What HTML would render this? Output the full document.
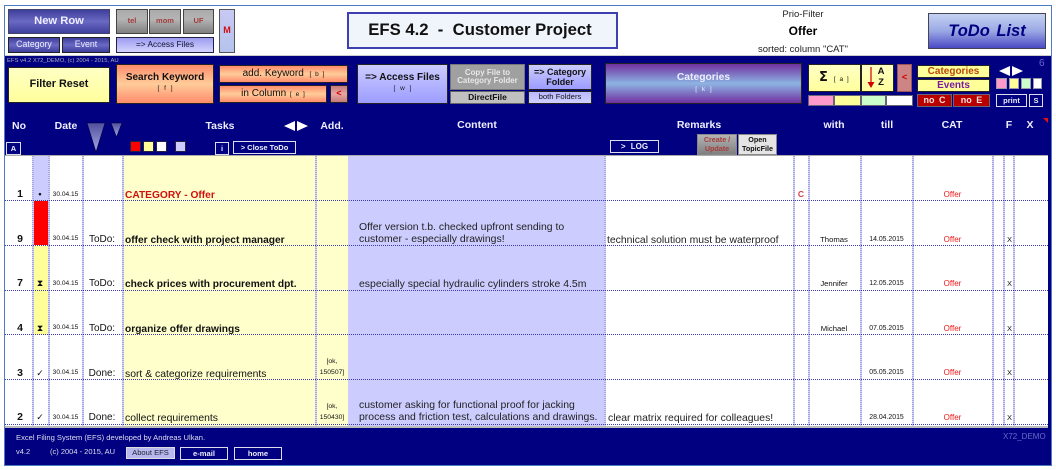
<!DOCTYPE html>
<html><head><meta charset="utf-8">
<style>
html,body{margin:0;padding:0;background:#fff}
#p{position:relative;width:1056px;height:470px;overflow:hidden;background:#fff;font-family:"Liberation Sans",sans-serif;color:#111;filter:blur(.35px)}
#p div{position:absolute;box-sizing:border-box;white-space:nowrap}
.b{display:flex;flex-direction:column;align-items:center;justify-content:center;text-align:center;border:1px solid #222;line-height:1.1}
.h{color:#eef;font-weight:bold;font-size:10.5px;line-height:12px;text-align:center}
.w{border:1px solid #dde;color:#eef;font-weight:bold;font-size:7.5px;display:flex;align-items:center;justify-content:center}
.v{top:156px;height:270px;width:2px;background:repeating-linear-gradient(180deg,#a8a8e4 0 1px,#d4d4f4 1px 2px)}
.l{left:5px;width:1043px;height:0;border-top:1px dotted #3a3ab0}
.n{left:8px;width:24px;text-align:center;font-weight:bold;font-size:10.5px;line-height:12px}
.m{left:32px;width:16px;text-align:center;font-size:9px;line-height:10px}
.d{left:48px;width:34px;text-align:center;font-size:6.6px;line-height:10px;padding-left:1px}
.s{left:82px;width:40px;text-align:center;font-size:10px;line-height:12px;margin-top:1px}
.k{left:125px;font-size:10.2px;line-height:12px;margin-top:1.5px}
.kn{left:125px;font-size:10.4px;line-height:12px;margin-top:1.5px}
.c{left:359px;font-size:10.45px;line-height:12.7px;color:#222;margin-top:1.5px}
.r{left:607px;font-size:10.4px;line-height:12px;color:#222;margin-top:1.5px}
.wi{left:808px;width:52px;text-align:center;font-size:7.7px;line-height:10px}
.ti{left:860px;width:53px;text-align:center;font-size:6.9px;line-height:10px}
.o{left:913px;width:79px;text-align:center;font-size:8px;line-height:10px;color:#f01818}
.x{left:1004px;width:11px;text-align:center;font-size:7.5px;line-height:10px}
</style></head><body><div id="p">

<div style="left:4px;top:5px;width:1048px;height:461px;border:1px solid #4f7cc0"></div>
<div style="left:5px;top:55px;width:1046px;height:1px;background:#ccc"></div>

<div class="b" style="left:8px;top:9px;width:102px;height:25px;background:linear-gradient(#3e3e9c,#6a6ac4 50%,#3e3e9c);color:#eef;font-weight:bold;font-size:11.2px;border-color:#446">New Row</div>
<div class="b" style="left:8px;top:37px;width:52px;height:16px;background:linear-gradient(#3e3e9c,#6a6ac4 50%,#3e3e9c);color:#eef;font-size:8.8px">Category</div>
<div class="b" style="left:62px;top:37px;width:48px;height:16px;background:linear-gradient(#3e3e9c,#6a6ac4 50%,#3e3e9c);color:#eef;font-size:8.8px">Event</div>
<div class="b" style="left:116px;top:9px;width:32px;height:25px;background:linear-gradient(#aaa,#b4b4b4 40%,#808080);color:#a23c3c;font-weight:bold;font-size:7.5px;border-color:#444">tel</div>
<div class="b" style="left:149px;top:9px;width:32px;height:25px;background:linear-gradient(#aaa,#b4b4b4 40%,#808080);color:#a23c3c;font-weight:bold;font-size:7.5px;border-color:#444">mom</div>
<div class="b" style="left:183px;top:9px;width:31px;height:25px;background:linear-gradient(#aaa,#b4b4b4 40%,#808080);color:#a23c3c;font-weight:bold;font-size:7.5px;border-color:#444">UF</div>
<div class="b" style="left:116px;top:37px;width:98px;height:16px;background:linear-gradient(#9c9cf0,#d4d4ff);color:#113;font-size:8.3px;border-color:#224">=&gt; Access Files</div>
<div class="b" style="left:219px;top:9px;width:16px;height:44px;background:linear-gradient(#c8c8f4,#b4c4ec);color:#d01010;font-weight:bold;font-size:9px;border-color:#555">M</div>

<div class="b" style="left:347px;top:12px;width:271px;height:37px;background:#f0f5fc;border:2px solid #3f3fb4;color:#111;font-weight:bold;font-size:16.7px;white-space:pre;padding-right:5px">EFS 4.2  -  Customer Project</div>

<div style="left:743px;top:9px;width:120px;text-align:center;font-size:9.5px;line-height:12px;color:#222">Prio-Filter</div>
<div style="left:743px;top:23px;width:120px;text-align:center;font-size:12px;font-weight:bold;line-height:16px;color:#000">Offer</div>
<div style="left:743px;top:44px;width:120px;text-align:center;font-size:9.5px;line-height:12px;color:#222">sorted: column "CAT"</div>
<div class="b" style="left:928px;top:13px;width:118px;height:36px;background:linear-gradient(#c4d2f2,#9aa8e4 50%,#4a4ac4);border-color:#445;color:#000080;font-weight:bold;font-style:italic;font-size:16.5px;word-spacing:2px">ToDo List</div>

<div style="left:5px;top:56px;width:1046px;height:100px;background:#000080"></div>
<div style="left:7px;top:58px;font-size:5.9px;line-height:7px;color:#aab">EFS v4.2 X72_DEMO, (c) 2004 - 2015, AU</div>

<div class="b" style="left:8px;top:67px;width:102px;height:36px;background:linear-gradient(#ffffc4,#ffff9c);font-weight:bold;font-size:10.8px">Filter Reset</div>
<div class="b" style="left:116px;top:64px;width:98px;height:40px;background:linear-gradient(#ff8c6c,#ffcc99 50%,#ff8c6c);font-weight:bold;font-size:10px;padding-bottom:4px">Search Keyword<span style="font-size:6.5px;font-weight:normal;word-spacing:3px;margin-top:2px">[ f ]</span></div>
<div class="b" style="left:219px;top:65px;width:129px;height:18px;background:linear-gradient(#ff8c6c,#ffcc99 50%,#ff8c6c);font-size:10px;display:block;line-height:16px">add. Keyword <span style="font-size:6.5px;word-spacing:2px;margin-left:3px">[ b ]</span></div>
<div class="b" style="left:219px;top:85px;width:108px;height:18px;background:linear-gradient(#ff8c6c,#ffcc99 50%,#ff8c6c);font-size:10px;display:block;line-height:16px">in Column <span style="font-size:6.5px;word-spacing:2px;margin-left:1px">[ e ]</span></div>
<div class="b" style="left:330px;top:85px;width:18px;height:18px;background:linear-gradient(#c47a7a,#e8a4a4 50%,#c47a7a);color:#d00000;font-weight:bold;font-size:9px">&lt;</div>

<div class="b" style="left:357px;top:64px;width:91px;height:40px;background:linear-gradient(#ccccff,#9c9cff);font-weight:bold;font-size:10px;padding-bottom:4px">=&gt; Access Files<span style="font-size:6.5px;font-weight:normal;word-spacing:3px;margin-top:2px">[ w ]</span></div>
<div class="b" style="left:450px;top:64px;width:75px;height:26px;background:#a0a0a0;color:#e8e8e8;font-weight:bold;font-size:7.9px;line-height:8.5px;border-color:#777">Copy File to<br>Category Folder</div>
<div class="b" style="left:450px;top:91px;width:75px;height:13px;background:#c0c0c0;font-weight:bold;font-size:8.5px;border-color:#666">DirectFile</div>
<div class="b" style="left:528px;top:64px;width:64px;height:26px;background:linear-gradient(#ccccff,#9c9cff);font-weight:bold;font-size:9px;line-height:10px">=&gt; Category<br>Folder</div>
<div class="b" style="left:528px;top:91px;width:64px;height:13px;background:linear-gradient(#b8b8ff,#d0d0ff);font-size:7.7px">both Folders</div>
<div class="b" style="left:605px;top:63px;width:197px;height:41px;background:linear-gradient(#7030a0,#8db4e2 50%,#7030a0);color:#eef;font-weight:bold;font-size:10.3px;padding-bottom:2px">Categories<span style="font-size:6.5px;font-weight:normal;word-spacing:3px;margin-top:3px">[ k ]</span></div>

<div class="b" style="left:808px;top:64px;width:53px;height:28px;background:linear-gradient(#ffffc4,#ffff9c);display:block;line-height:24px;padding-left:10px;text-align:left"><span style="font-family:'DejaVu Sans',sans-serif;font-weight:bold;font-size:13px">Σ</span><span style="font-size:6.5px;word-spacing:2px;margin-left:6px">[ a ]</span></div>
<div class="b" style="left:861px;top:64px;width:33px;height:28px;background:linear-gradient(#ffffc4,#ffff9c)"></div>
<svg style="position:absolute;left:866px;top:66px" width="10" height="24"><path d="M5 1V18" stroke="#d00000" stroke-width="1.2"/><path d="M1.5 16H8.5L5 22Z" fill="#d00000"/></svg>
<div style="left:875px;top:66px;width:12px;text-align:center;font-weight:bold;font-size:9.5px;line-height:11px">A<br>Z</div>
<div class="b" style="left:897px;top:64px;width:15px;height:28px;background:#cc8484;color:#d00000;font-weight:bold;font-size:9px;border-color:#955">&lt;</div>
<div style="left:808px;top:95px;width:26px;height:11px;background:#ff99cc;border:1px solid #667"></div>
<div style="left:834px;top:95px;width:27px;height:11px;background:#ffff99;border:1px solid #667"></div>
<div style="left:861px;top:95px;width:25px;height:11px;background:#ccffcc;border:1px solid #667"></div>
<div style="left:886px;top:95px;width:27px;height:11px;background:#fff;border:1px solid #667"></div>

<div class="b" style="left:917px;top:65px;width:73px;height:13px;background:#ffff99;color:#b8480c;font-weight:bold;font-size:10px">Categories</div>
<div class="b" style="left:917px;top:79px;width:73px;height:13px;background:#ffff99;color:#7a1ca0;font-weight:bold;font-size:10px">Events</div>
<div class="b" style="left:917px;top:94px;width:35px;height:13px;background:#b80000;color:#f4e0e0;font-weight:bold;font-size:9px;word-spacing:2px;border-color:#667">no C</div>
<div class="b" style="left:953px;top:94px;width:37px;height:13px;background:#b80000;color:#f4e0e0;font-weight:bold;font-size:9px;word-spacing:2px;border-color:#667">no E</div>

<svg style="position:absolute;left:998px;top:65px" width="26" height="12"><path d="M1 6L12 1V11Z" fill="#fff"/><path d="M14 1L25 6L14 11Z" fill="#fff"/></svg>
<div style="left:996px;top:78px;width:11px;height:11px;background:#ff99cc;border:1px solid #99a"></div>
<div style="left:1009px;top:78px;width:10px;height:11px;background:#ffff99;border:1px solid #99a"></div>
<div style="left:1021px;top:78px;width:10px;height:11px;background:#ccffcc;border:1px solid #99a"></div>
<div style="left:1033px;top:78px;width:9px;height:11px;background:#fff;border:1px solid #99a"></div>
<div class="w" style="left:996px;top:94px;width:31px;height:13px">print</div>
<div class="w" style="left:1029px;top:94px;width:14px;height:13px">S</div>
<div style="left:1039px;top:58px;font-size:10px;line-height:12px;color:#6a6ad4">6</div>

<div class="h" style="left:9px;top:120px;width:20px">No</div>
<div class="h" style="left:50px;top:120px;width:32px">Date</div>
<svg style="position:absolute;left:86px;top:122px" width="37" height="31"><defs><linearGradient id="g" x1="0" y1="0" x2="0" y2="1"><stop offset="0" stop-color="#50509c"/><stop offset="1" stop-color="#a8a8e8"/></linearGradient></defs><path d="M1 1H19L10 30Z" fill="url(#g)" stroke="#000040" stroke-width=".6"/><path d="M25 1H36L30.5 15Z" fill="url(#g)" stroke="#000040" stroke-width=".6"/></svg>
<div class="h" style="left:200px;top:120px;width:40px">Tasks</div>
<svg style="position:absolute;left:283px;top:120px" width="26" height="12"><path d="M1 6L12 1V11Z" fill="#fff"/><path d="M14 1L25 6L14 11Z" fill="#fff"/></svg>
<div class="h" style="left:316px;top:120px;width:32px">Add.</div>
<div class="h" style="left:447px;top:119px;width:60px">Content</div>
<div class="h" style="left:669px;top:119px;width:60px">Remarks</div>
<div class="h" style="left:814px;top:119px;width:40px">with</div>
<div class="h" style="left:867px;top:119px;width:40px">till</div>
<div class="h" style="left:932px;top:119px;width:40px">CAT</div>
<div class="h" style="left:999px;top:119px;width:20px">F</div>
<div class="h" style="left:1020px;top:119px;width:20px">X</div>
<svg style="position:absolute;left:1043px;top:118px" width="6" height="6"><path d="M0 0H5V5Z" fill="#e01010"/></svg>

<div class="w" style="left:6px;top:142px;width:15px;height:13px">A</div>
<div style="left:130px;top:141px;width:11px;height:11px;background:#f00;border:1px solid #224"></div>
<div style="left:143px;top:141px;width:11px;height:11px;background:#ffff99;border:1px solid #224"></div>
<div style="left:156px;top:141px;width:11px;height:11px;background:#fff;border:1px solid #224"></div>
<div style="left:175px;top:141px;width:11px;height:11px;background:#ccccff;border:1px solid #224"></div>
<div class="w" style="left:215px;top:142px;width:14px;height:13px">i</div>
<div class="w" style="left:233px;top:141px;width:63px;height:13px">&gt; Close ToDo</div>
<div class="w" style="left:610px;top:140px;width:49px;height:13px;word-spacing:3px;font-size:8px">&gt; LOG</div>
<div class="b" style="left:697px;top:134px;width:40px;height:21px;background:linear-gradient(#b4b4b4,#808080);color:#a83c3c;font-weight:bold;font-size:7.2px;line-height:8.5px;border-color:#888">Create /<br>Update</div>
<div class="b" style="left:738px;top:134px;width:39px;height:21px;background:#e4e4e4;color:#111;font-weight:bold;font-size:7.2px;line-height:8.5px;border-color:#888">Open<br>TopicFile</div>
<div style="left:5px;top:155px;width:1043px;height:1px;background:#aaa"></div>

<!-- table -->
<div style="left:5px;top:156px;width:1043px;height:272px;background:#fff"></div>
<div style="left:122px;top:156px;width:226px;height:270px;background:#ffffcc"></div>
<div style="left:348px;top:156px;width:257px;height:270px;background:#ccccff"></div>
<div style="left:33px;top:156px;width:15px;height:45px;background:#ccccff"></div>
<div style="left:33px;top:201px;width:15px;height:44px;background:#f00"></div>
<div style="left:33px;top:246px;width:15px;height:89px;background:#ffff99"></div>
<div class="v" style="left:32px"></div><div class="v" style="left:48px"></div><div class="v" style="left:82px"></div>
<div class="v" style="left:122px"></div><div class="v" style="left:315px"></div><div class="v" style="left:604px"></div>
<div class="v" style="left:793px"></div><div class="v" style="left:808px"></div><div class="v" style="left:860px"></div>
<div class="v" style="left:912px"></div><div class="v" style="left:992px"></div><div class="v" style="left:1003px"></div><div class="v" style="left:1013px"></div>
<div class="l" style="top:200px"></div><div class="l" style="top:245px"></div><div class="l" style="top:290px"></div>
<div class="l" style="top:334px"></div><div class="l" style="top:379px"></div><div class="l" style="top:424px"></div>

<div class="n" style="top:188px">1</div><div class="m" style="top:189px;font-weight:bold">•</div><div class="d" style="top:190px">30.04.15</div>
<div class="k" style="top:188px;color:#d01010;font-weight:bold">CATEGORY - Offer</div>
<div style="left:794px;top:189px;width:14px;text-align:center;font-size:8.5px;font-weight:bold;line-height:10px;color:#d84040">C</div>
<div class="o" style="top:190px">Offer</div>

<div class="n" style="top:233px">9</div><div class="d" style="top:234px">30.04.15</div><div class="s" style="top:233px">ToDo:</div>
<div class="k" style="top:233px;font-weight:bold">offer check with project manager</div>
<div class="c" style="top:220px">Offer version t.b. checked upfront sending to<br>customer - especially drawings!</div>
<div class="r" style="top:233px">technical solution must be waterproof</div>
<div class="wi" style="top:235px">Thomas</div><div class="ti" style="top:235px">14.05.2015</div><div class="o" style="top:235px">Offer</div><div class="x" style="top:235px">X</div>

<div class="n" style="top:277px">7</div><div class="m" style="top:278px">⧗</div><div class="d" style="top:279px">30.04.15</div><div class="s" style="top:277px">ToDo:</div>
<div class="k" style="top:277px;font-weight:bold">check prices with procurement dpt.</div>
<div class="c" style="top:277px">especially special hydraulic cylinders stroke 4.5m</div>
<div class="wi" style="top:279px">Jennifer</div><div class="ti" style="top:279px">12.05.2015</div><div class="o" style="top:279px">Offer</div><div class="x" style="top:279px">X</div>

<div class="n" style="top:322px">4</div><div class="m" style="top:323px">⧗</div><div class="d" style="top:323px">30.04.15</div><div class="s" style="top:322px">ToDo:</div>
<div class="k" style="top:322px;font-weight:bold">organize offer drawings</div>
<div class="wi" style="top:324px">Michael</div><div class="ti" style="top:324px">07.05.2015</div><div class="o" style="top:324px">Offer</div><div class="x" style="top:324px">X</div>

<div class="n" style="top:367px">3</div><div class="m" style="top:368px">✓</div><div class="d" style="top:368px">30.04.15</div><div class="s" style="top:367px">Done:</div>
<div class="kn" style="top:367px">sort &amp; categorize requirements</div>
<div style="left:316px;top:357px;width:32px;text-align:center;font-size:6.8px;line-height:10.5px">[ok,<br>150507]</div>
<div class="ti" style="top:368px">05.05.2015</div><div class="o" style="top:368px">Offer</div><div class="x" style="top:368px">X</div>

<div class="n" style="top:411px">2</div><div class="m" style="top:412px">✓</div><div class="d" style="top:413px">30.04.15</div><div class="s" style="top:411px">Done:</div>
<div class="kn" style="top:411px">collect requirements</div>
<div style="left:316px;top:402px;width:32px;text-align:center;font-size:6.8px;line-height:10.5px">[ok,<br>150430]</div>
<div class="c" style="top:398px">customer asking for functional proof for jacking<br>process and friction test, calculations and drawings.</div>
<div class="r" style="top:411px;left:608px">clear matrix required for colleagues!</div>
<div class="ti" style="top:413px">28.04.2015</div><div class="o" style="top:413px">Offer</div><div class="x" style="top:413px">X</div>

<div style="left:1048px;top:156px;width:3px;height:272px;background:#000080"></div>
<div style="left:5px;top:426px;width:1043px;height:2px;background:#bbb"></div>
<div style="left:5px;top:428px;width:1046px;height:37px;background:#000080"></div>
<div style="left:16px;top:433px;font-size:7.6px;line-height:10px;color:#dde">Excel Filing System (EFS) developed by Andreas Ulkan.</div>
<div style="left:16px;top:447px;font-size:7.5px;line-height:10px;color:#dde">v4.2</div>
<div style="left:50px;top:447px;font-size:7.5px;line-height:10px;color:#dde">(c) 2004 - 2015, AU</div>
<div class="b" style="left:126px;top:447px;width:49px;height:12px;background:#b8b8ee;font-size:7.6px;color:#223;border-color:#ddd">About EFS</div>
<div class="w" style="left:180px;top:447px;width:48px;height:13px;font-size:7.6px">e-mail</div>
<div class="w" style="left:234px;top:447px;width:48px;height:13px;font-size:7.6px">home</div>
<div style="left:1003px;top:432px;font-size:8px;line-height:10px;color:#6a6ac8">X72_DEMO</div>
</div></body></html>
